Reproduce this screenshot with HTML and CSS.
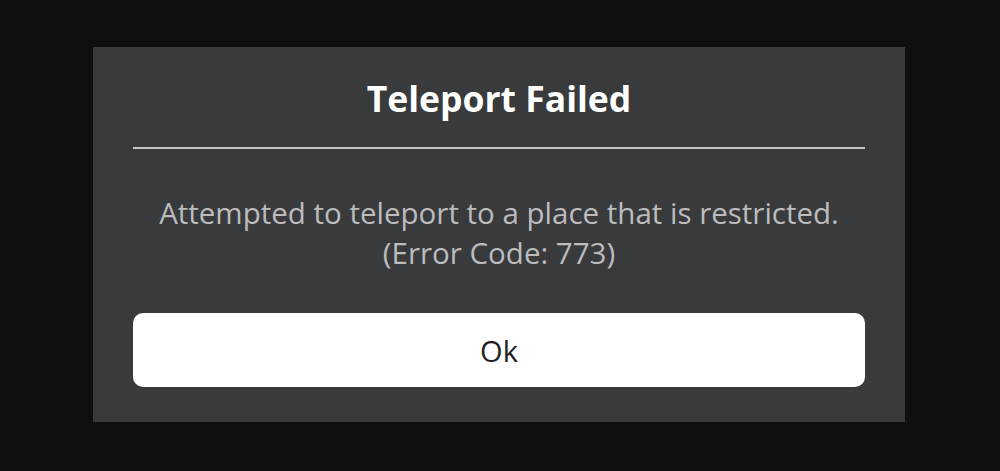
FILE: index.html
```html
<!DOCTYPE html>
<html lang="en">
<head>
  <meta charset="UTF-8" />
  <title>Teleport Failed</title>
  <link rel="stylesheet" href="styles.css">
</head>
<body>
  <div class="dialog">
    <h2 class="title">Teleport Failed</h2>
    <div class="divider"></div>
    <p class="message">Attempted to teleport to a place that is restricted.<br>(Error Code: 773)</p>
    <button type="button" class="btn-ok">Ok</button>
  </div>
</body>
</html>
```

FILE: styles.css
```css
body {
  margin: 0;
  background: #0f0f0f;
  font-family: 'Open Sans', sans-serif;
}
.dialog {
  width: 812px;
  margin: 47px 0 0 93px;
  padding: 0 40px 35px;
  box-sizing: border-box;
  background: #393a3c;
  display: flex;
  flex-direction: column;
}
.title {
  margin: 0;
  height: 100px;
  line-height: 102px;
  text-align: center;
  color: #ffffff;
  font-size: 35.5px;
  font-weight: bold;
}
.divider {
  height: 2px;
  background: #c6c6c6;
}
.message {
  margin: 44px 0 0;
  text-align: center;
  color: #bcbcbc;
  font-size: 29.5px;
  line-height: 40px;
}
.btn-ok {
  margin-top: 40px;
  height: 74px;
  border: none;
  border-radius: 10px;
  background: #ffffff;
  color: #1f1f1f;
  font-family: inherit;
  font-size: 29px;
}
```
